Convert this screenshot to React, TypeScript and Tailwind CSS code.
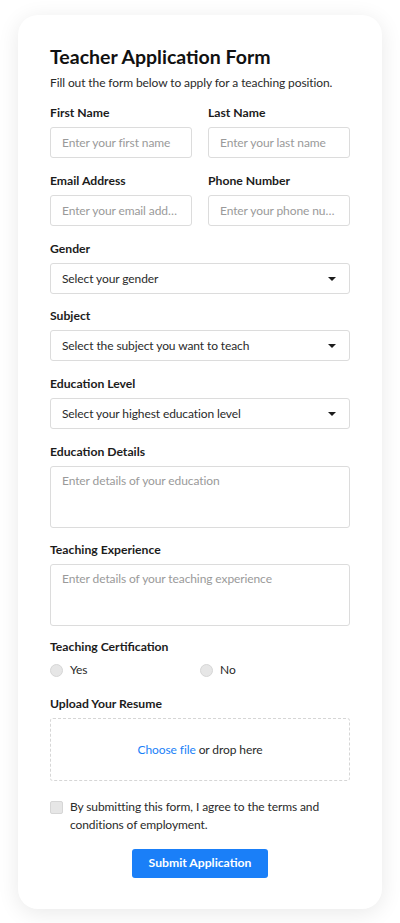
import React from "react";

const font = { fontFamily: 'Lato, "Noto Sans", sans-serif' };

function Label({ children }: { children: React.ReactNode }) {
  return <div className="mb-[5px] text-[12.2px] font-bold leading-[18px] text-[#1c1c1c]">{children}</div>;
}

function TextInput({ placeholder }: { placeholder: string }) {
  return (
    <input
      type="text"
      placeholder={placeholder}
      className="h-[31px] w-full min-w-0 truncate rounded-[3px] border border-[#dcdcdc] bg-white px-[11px] text-[12px] tracking-[-0.1px] text-[#333] outline-none placeholder:text-[#9a9a9a]"
    />
  );
}

function Select({ text }: { text: string }) {
  return (
    <div className="flex h-[31px] w-full items-center justify-between rounded-[3px] border border-[#dcdcdc] bg-white pl-[11px] pr-[13px] text-[12px] tracking-[-0.1px] text-[#2a2a2a]">
      <span>{text}</span>
      <svg width="8" height="4" viewBox="0 0 8 4">
        <path d="M0 0h8L4 4z" fill="#1c1c1c" />
      </svg>
    </div>
  );
}

function TextArea({ placeholder }: { placeholder: string }) {
  return (
    <textarea
      placeholder={placeholder}
      className="block h-[62px] w-full resize-none rounded-[3px] border border-[#dcdcdc] bg-white px-[11px] py-[5px] text-[12px] leading-[18px] tracking-[-0.1px] text-[#333] outline-none placeholder:text-[#9a9a9a]"
    />
  );
}

function Radio({ label }: { label: string }) {
  return (
    <label className="flex items-center gap-[7px] text-[12px] tracking-[-0.1px] text-[#2a2a2a]">
      <span className="h-[13px] w-[13px] rounded-full border border-[#d6d6d6] bg-[#e6e6e6]" />
      {label}
    </label>
  );
}

export default function App() {
  return (
    <div className="min-h-screen bg-white px-[18px] pt-[15px] pb-[15px]" style={font}>
      <div className="rounded-[20px] bg-white px-[32px] pt-[28px] pb-[31px] shadow-[0_4px_22px_rgba(0,0,0,0.09)]">
        <h1 className="text-[19.5px] font-bold leading-[28px] text-[#111]">Teacher Application Form</h1>
        <p className="mt-[2px] text-[12px] leading-[20px] tracking-[-0.1px] text-[#2a2a2a]">
          Fill out the form below to apply for a teaching position.
        </p>

        <div className="mt-[11px] flex flex-col gap-[14px]">
          <div className="grid grid-cols-2 gap-x-[16px]">
            <div>
              <Label>First Name</Label>
              <TextInput placeholder="Enter your first name" />
            </div>
            <div>
              <Label>Last Name</Label>
              <TextInput placeholder="Enter your last name" />
            </div>
          </div>
          <div className="grid grid-cols-2 gap-x-[16px]">
            <div>
              <Label>Email Address</Label>
              <TextInput placeholder="Enter your email address" />
            </div>
            <div>
              <Label>Phone Number</Label>
              <TextInput placeholder="Enter your phone number" />
            </div>
          </div>
          <div>
            <Label>Gender</Label>
            <Select text="Select your gender" />
          </div>
          <div className="-mt-[1px]">
            <Label>Subject</Label>
            <Select text="Select the subject you want to teach" />
          </div>
          <div>
            <Label>Education Level</Label>
            <Select text="Select your highest education level" />
          </div>
          <div>
            <Label>Education Details</Label>
            <TextArea placeholder="Enter details of your education" />
          </div>
          <div className="-mt-[1px]">
            <Label>Teaching Experience</Label>
            <TextArea placeholder="Enter details of your teaching experience" />
          </div>
          <div className="-mt-[2px]">
            <Label>Teaching Certification</Label>
            <div className="grid grid-cols-2 leading-[18px]">
              <Radio label="Yes" />
              <Radio label="No" />
            </div>
          </div>
          <div className="pt-[2px]">
            <Label>Upload Your Resume</Label>
            <div className="flex h-[63px] items-center justify-center rounded-[3px] border border-dashed border-[#d6d6d6] text-[12px] tracking-[-0.1px] text-[#2a2a2a]">
              <span>
                <span className="text-[#1a7ff8]">Choose file</span> or drop here
              </span>
            </div>
          </div>
          <div className="mt-[3px] flex items-start gap-[7px]">
            <span className="mt-[3px] h-[13px] w-[13px] shrink-0 rounded-[2px] border border-[#d6d6d6] bg-[#e6e6e6]" />
            <p className="pr-[30px] text-[12px] leading-[18px] tracking-[-0.1px] text-[#2a2a2a]">
              By submitting this form, I agree to the terms and conditions of employment.
            </p>
          </div>
          <div className="mt-[1px] flex justify-center">
            <button className="h-[29px] w-[136px] rounded-[3px] bg-[#1a7ff8] text-[12.2px] font-bold text-white">
              Submit Application
            </button>
          </div>
        </div>
      </div>
    </div>
  );
}
